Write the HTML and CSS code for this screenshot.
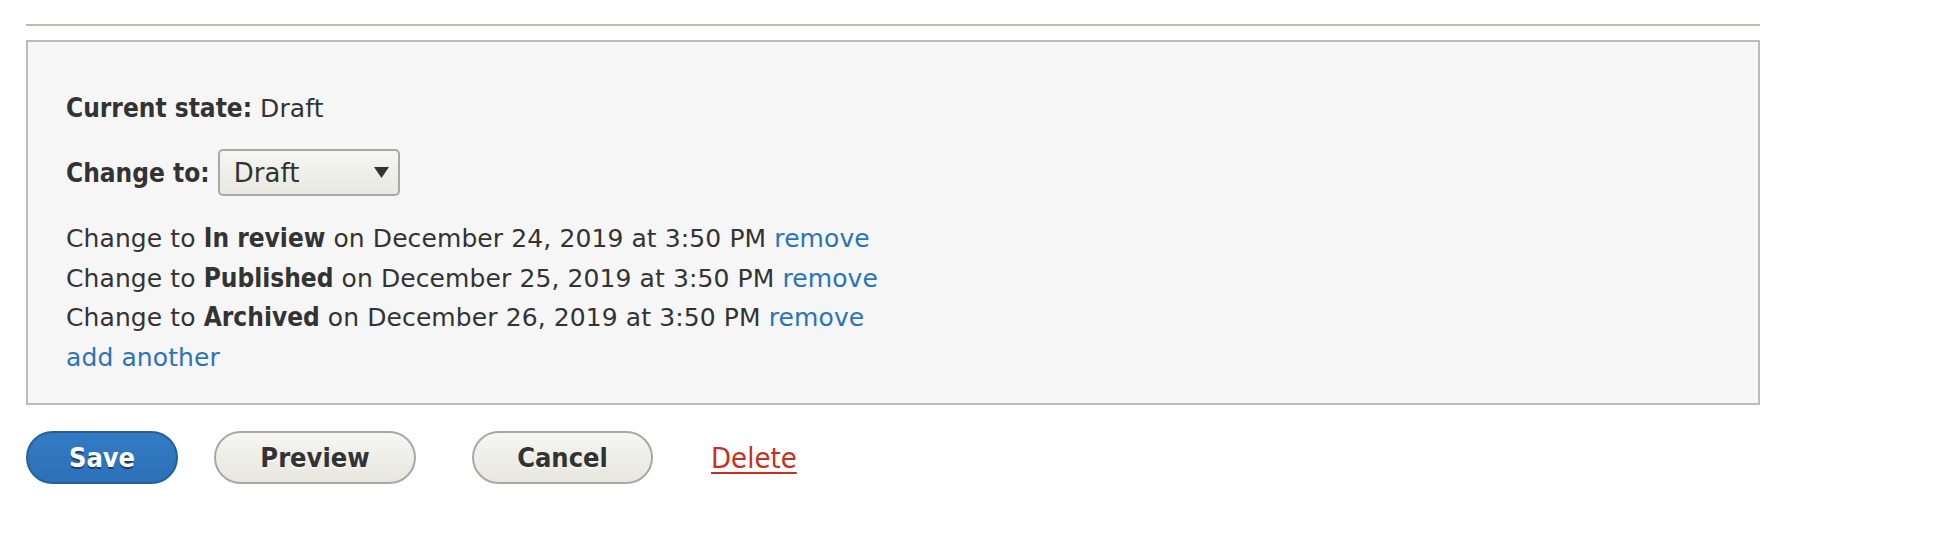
FILE: index.html
```html
<!DOCTYPE html>
<html lang="en">
<head>
<meta charset="utf-8">
<title>Moderation state</title>
<link rel="stylesheet" href="styles.css">
</head>
<body>
<div class="page">
  <hr class="rule">
  <div class="panel">
    <div class="state"><strong>Current state:</strong> Draft</div>
    <div class="change">
      <label class="change-label">Change to:</label>
      <span class="select">
        <span class="select-value">Draft</span>
        <svg class="select-arrow" width="15" height="11" viewBox="0 0 15 11" aria-hidden="true"><polygon points="0,0 15,0 7.5,11" fill="#333"/></svg>
      </span>
    </div>
    <ul class="schedule">
      <li>Change to <strong>In review</strong> on December 24, 2019 at 3:50 PM <a class="link" href="#">remove</a></li>
      <li>Change to <strong>Published</strong> on December 25, 2019 at 3:50 PM <a class="link" href="#">remove</a></li>
      <li>Change to <strong>Archived</strong> on December 26, 2019 at 3:50 PM <a class="link" href="#">remove</a></li>
      <li><a class="link" href="#">add another</a></li>
    </ul>
  </div>
  <div class="actions">
    <button class="button button--primary button--save" type="button">Save</button>
    <button class="button button--preview" type="button">Preview</button>
    <a class="button button--cancel" href="#">Cancel</a>
    <a class="delete" href="#">Delete</a>
  </div>
</div>
</body>
</html>
```

FILE: styles.css
```css
html, body {
  margin: 0;
  padding: 0;
  background: #fff;
}

body {
  font-family: "DejaVu Sans", sans-serif;
  font-size: 25px;
  letter-spacing: 0.1px;
  color: #333;
}

strong,
.change-label {
  font-family: "DejaVu Sans Condensed", "DejaVu Sans", sans-serif;
  font-size: 26px;
  font-weight: bold;
  letter-spacing: 0;
}

.page {
  width: 1734px;
  margin-left: 26px;
}

.rule {
  margin: 24px 0 0;
  height: 2px;
  border: 0;
  background: #bdbdb7;
}

.panel {
  margin-top: 14px;
  border: 2px solid #bcbcbc;
  background: #f6f6f6;
  padding: 46px 38px 26px;
}

.state {
  line-height: 40px;
}

.change {
  display: flex;
  align-items: baseline;
  margin-top: 20px;
  height: 47px;
}

.change-label {
  margin-right: 8px;
}

.select {
  box-sizing: border-box;
  display: inline-flex;
  align-items: center;
  justify-content: space-between;
  width: 182px;
  height: 47px;
  padding: 0 9px 0 14px;
  border: 2px solid #a8a8a8;
  border-radius: 5px;
  background: linear-gradient(to bottom, #f6f6f3, #e8e8e1);
  font-size: 26px;
}

.select-arrow {
  display: block;
  margin-top: -1px;
}

.schedule {
  list-style: none;
  margin: 23px 0 0;
  padding: 0;
  line-height: 39.5px;
}

.link {
  color: #2b73ba;
  text-decoration: none;
}

.actions {
  display: flex;
  align-items: center;
  margin-top: 26px;
}

.button {
  box-sizing: border-box;
  display: inline-flex;
  align-items: center;
  justify-content: center;
  height: 53px;
  padding: 0;
  border: 2px solid #a8a8a8;
  border-radius: 40px;
  background: linear-gradient(to bottom, #f6f6f3, #e7e7df);
  color: #333;
  font-family: "DejaVu Sans Condensed", "DejaVu Sans", sans-serif;
  font-size: 27px;
  font-weight: bold;
  letter-spacing: 0;
  text-decoration: none;
  text-shadow: 0 2px rgba(255, 255, 255, 0.6);
  cursor: pointer;
}

.button--primary {
  border-color: #25609b;
  background: linear-gradient(to bottom, #327bc4, #2c71b8);
  color: #fff;
  text-shadow: 0 2px rgba(0, 0, 0, 0.45);
}

.button--save {
  width: 152px;
  margin-right: 36px;
}

.button--preview {
  width: 202px;
  margin-right: 56px;
}

.button--cancel {
  width: 181px;
  margin-right: 58px;
}

.delete {
  font-family: "DejaVu Sans Condensed", "DejaVu Sans", sans-serif;
  font-size: 29px;
  letter-spacing: 0;
  color: #c4321f;
  text-decoration: underline;
  text-decoration-thickness: 2px;
  text-underline-offset: 4px;
}
```
